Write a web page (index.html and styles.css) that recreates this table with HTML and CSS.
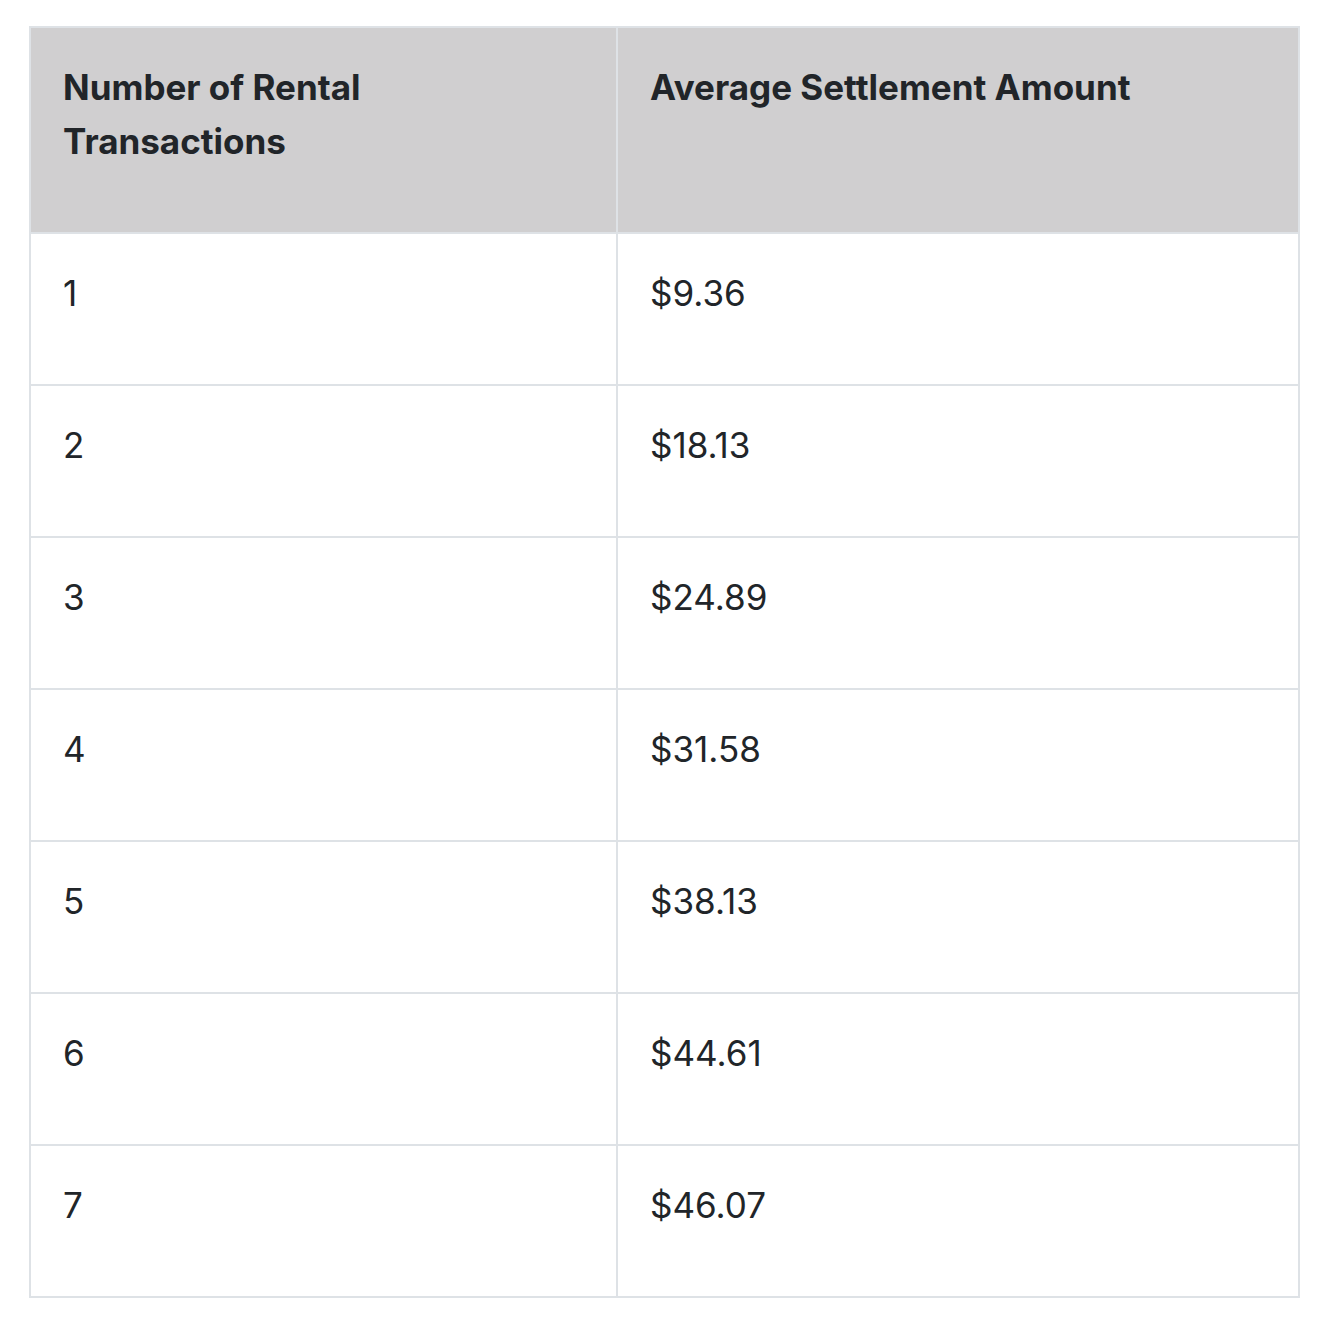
FILE: index.html
```html
<!DOCTYPE html>
<html>
<head>
<meta charset="utf-8">
<link rel="stylesheet" href="styles.css">
</head>
<body>
<div class="wrap">
<table class="data">
<thead>
<tr><th class="c1">Number of Rental Transactions</th><th class="c2">Average Settlement Amount</th></tr>
</thead>
<tbody>
<tr><td>1</td><td>$9.36</td></tr>
<tr><td>2</td><td>$18.13</td></tr>
<tr><td>3</td><td>$24.89</td></tr>
<tr><td>4</td><td>$31.58</td></tr>
<tr><td>5</td><td>$38.13</td></tr>
<tr><td>6</td><td>$44.61</td></tr>
<tr><td>7</td><td>$46.07</td></tr>
</tbody>
</table>
</div>
</body>
</html>
```
FILE: styles.css
```css
html, body {
  margin: 0;
  padding: 0;
  background: #ffffff;
}
.wrap {
  padding: 26px 0 0 29px;
}
.data {
  border-collapse: collapse;
  width: 1271px;
  table-layout: fixed;
  font-family: Inter, "Noto Sans", sans-serif;
  font-size: 35px;
  line-height: 54px;
  color: #212529;
}
.data th, .data td {
  border: 2px solid #dee2e6;
  padding: 32px 32px 64px 32px;
  text-align: left;
  vertical-align: top;
}
.data th {
  background: #d0cfd0;
  font-weight: 700;
}
.data td {
  font-weight: 400;
}
.c1 { width: 521px; }
.c2 { width: auto; }
```
